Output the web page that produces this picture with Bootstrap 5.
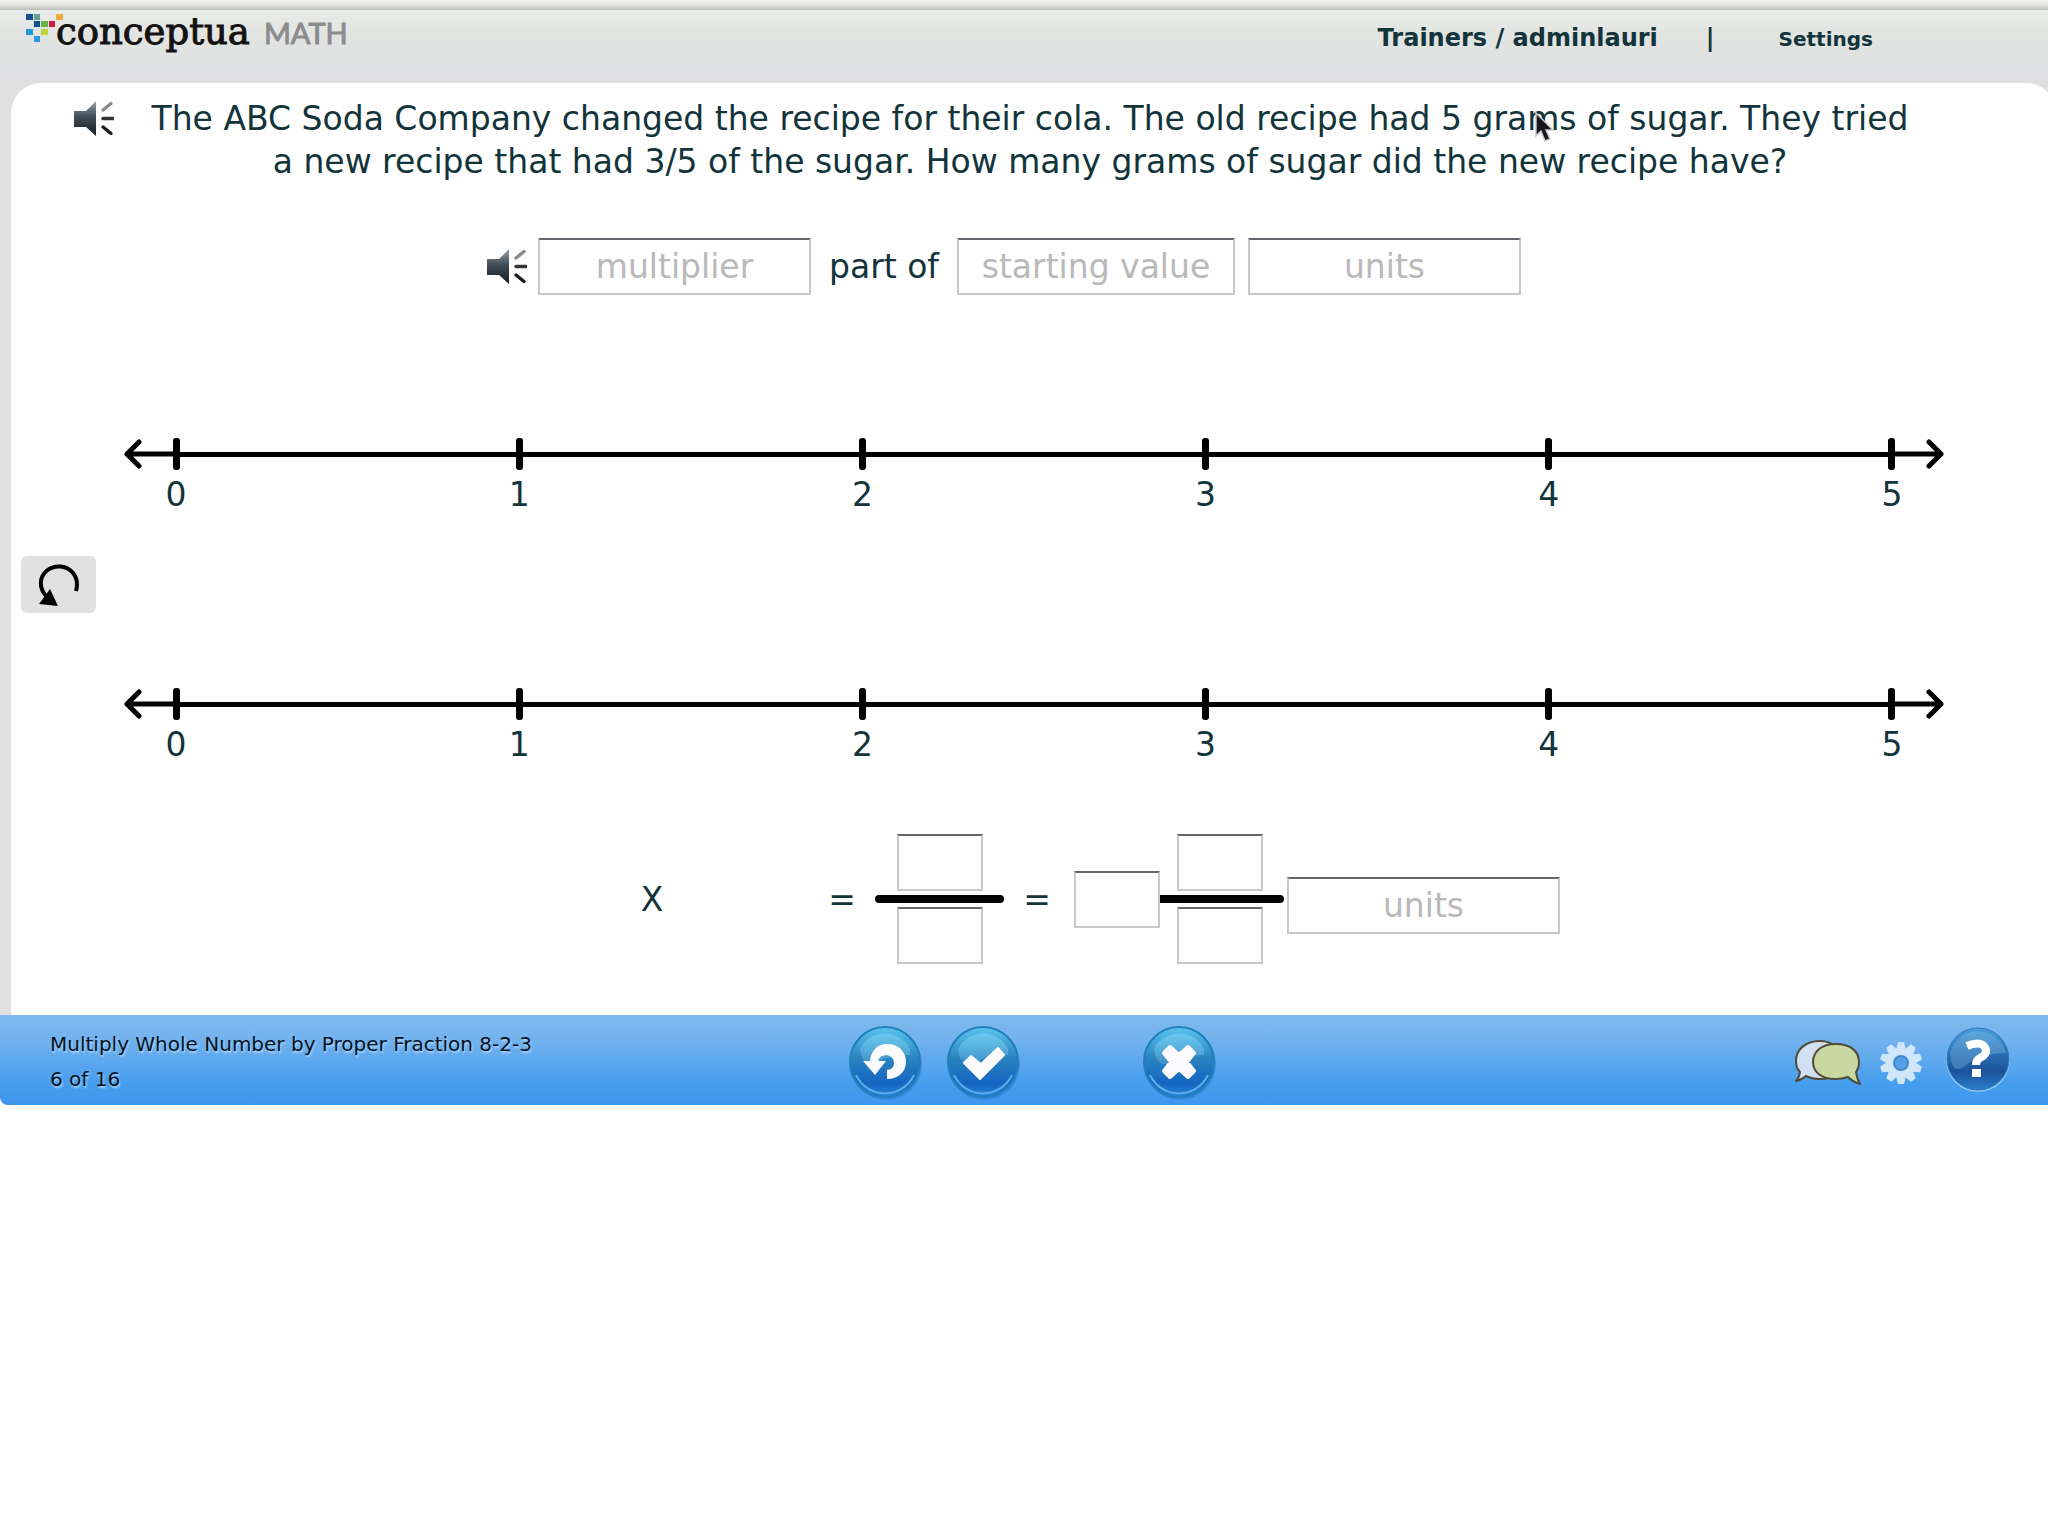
<!DOCTYPE html>
<html lang="en">
<head>
<meta charset="utf-8">
<meta name="viewport" content="width=device-width, initial-scale=1">
<title>Conceptua Math</title>
<link href="https://cdn.jsdelivr.net/npm/bootstrap@5.3.0/dist/css/bootstrap.min.css" rel="stylesheet">
<style>
body{background:#fefefe;color:#12343a;font-family:"DejaVu Sans",sans-serif;font-size:33px;line-height:43px;overflow-x:hidden}
.player{background:#e0e0e1;border-bottom-left-radius:8px;overflow:hidden}
.window-edge{height:10px;background:linear-gradient(#f0f1ef,#e6e8e5 45%,#b9bcb7)}
.topbar{height:73px;padding:0 175px 0 26px;background:linear-gradient(#e8ebe7,#e1e4e1 35%,#dfdfe2)}
.topbar a{color:inherit;text-decoration:none}
.logo{gap:14px}
.logo-squares{margin-right:-8px}
.logo-word{font-family:"DejaVu Serif",serif;font-size:37px;color:#131313;-webkit-text-stroke:1px #131313}
.logo-math{font-family:Lato,sans-serif;font-size:29px;color:#8c8c8e;-webkit-text-stroke:1px #8c8c8e}
.topnav{padding-top:7px}
.account{font-size:24px}
.settings{font-size:20px}
.sheet{background:#fefefe;margin:0 -8px 0 11px;border-radius:30px 30px 0 0;padding:14px 0 51px}
.question{gap:26px;padding:0 136px 0 62px}
.answer-row{margin-top:55px;padding-right:60px}
.speak{margin-right:11px}
.entry{height:57px;border:2px solid #c9c7cb;border-top-color:#66646a;border-radius:0;background:#fefefe;padding:0;text-align:center;font-size:33px;color:#12343a}
.entry::placeholder{color:#b9b9ba;opacity:1}
.entry:focus{outline:2px solid #4a9fee}
.w-unit{width:273px}.w-start{width:278px}.w-digit{width:86px}
.word-slot{width:146px}
.noun{margin-left:13px}
.lines{margin-top:143px}
.reset{width:75px;height:57px;margin:118px 0 0 10px;border:0;border-radius:6px;background:#e1e1e2;padding:0}
.axes{margin-left:28px;margin-right:112px}
.axis+.axis{margin-top:172px}
.shaft{height:32px}
.ticks{background:linear-gradient(#000,#000) center/100% 5px no-repeat}
.tick{width:7px;height:32px;border-radius:3px;background:#000}
.numerals{margin-top:3px;padding:0 30px}
.numerals span{width:44px;text-align:center}
.equation{margin-top:68px}
.blank-a{width:115px}.blank-b{width:127px}.sym-x{width:60px}.sym-eq{width:66px}
.bar{height:8px;margin:4px 0;background:#000;border-radius:4px;align-self:stretch}
.fraction{width:129px}.fraction-mixed{width:124px}
.fraction-mixed .bar{border-radius:0 4px 4px 0}
.fraction-mixed .entry{margin-right:4px}
.result{margin:12px 0 0 3px}
.toolbar{height:90px;background:linear-gradient(#7db9ee,#75b3ee 25%,#479eee 75%,#3e97ee);padding:4px 36px 0 50px}
.lesson{font-size:20px;line-height:35px;color:#06131f;text-shadow:1px 2px 2px #a9d4fa}
.side{flex:1 1 0}
.icon-btn{border:0;background:none;padding:0;line-height:0}
.gap-a{margin-left:18px}.gap-b{margin-left:116px}
.pointer{position:absolute;left:1534px;top:112px;pointer-events:none}
</style>
</head>
<body>
<div class="player">
  <div class="window-edge"></div>
  <header class="topbar d-flex align-items-start">
    <a href="#" class="logo d-flex align-items-baseline">
      <span class="d-flex align-items-start">
        <svg class="logo-squares flex-shrink-0 mt-1" width="38" height="30" viewBox="0 0 38 30" aria-hidden="true">
          <path fill="#11508f" d="M0 0h7v6H0zM8 7h6v6H8z"/><path fill="#5fa58a" d="M8 0h6v6H8z"/><path fill="#61b34a" d="M15 7h7v6h-7z"/>
          <path fill="#c9203c" d="M23 7h6v6h-6z"/><path fill="#efad36" d="M30 0h7v6h-7z"/><path fill="#2699dc" d="M0 15h7v6H0zM8 22h6v6H8z"/><path fill="#bed33c" d="M15 15h7v6h-7z"/>
        </svg>
        <span class="logo-word">conceptua</span>
      </span>
      <span class="logo-math">MATH</span>
    </a>
    <nav class="topnav ms-auto d-flex align-items-baseline fw-bold">
      <a href="#" class="account">Trainers / adminlauri</a>
      <span class="account mx-5">|</span>
      <a href="#" class="settings ms-3">Settings</a>
    </nav>
  </header>

  <main class="sheet">
    <div class="question d-flex align-items-start">
      <button class="icon-btn mt-1 flex-shrink-0" aria-label="Read the question aloud">
        <svg width="41" height="36" viewBox="0 0 41 36"><defs><linearGradient id="spk" x1="0" y1="0" x2="0" y2="1"><stop offset="0" stop-color="#9aa2a8"/><stop offset=".45" stop-color="#414d57"/><stop offset="1" stop-color="#111b22"/></linearGradient></defs>
        <path fill="url(#spk)" d="M1 10h12L23 0v35L13 26H1z"/><g stroke-width="3.4" stroke-linecap="round"><path stroke="#8b8b8f" d="M30 9l8-6.500"/><path stroke="#353238" d="M30 17.500h10"/><path stroke="#1e1a20" d="M30 26l8 6.500"/></g></svg>
      </button>
      <p class="mb-0 flex-grow-1 text-center">The ABC Soda Company changed the recipe for their cola. The old recipe had 5 grams of sugar. They tried<br class="d-none d-xl-inline"> a new recipe that had 3/5 of the sugar. How many grams of sugar did the new recipe have?</p>
    </div>

    <div class="answer-row d-flex justify-content-center align-items-center">
      <button class="icon-btn speak" aria-label="Read the sentence aloud">
        <svg width="41" height="36" viewBox="0 0 41 36"><path fill="url(#spk)" d="M1 10h12L23 0v35L13 26H1z"/><g stroke-width="3.4" stroke-linecap="round"><path stroke="#8b8b8f" d="M30 9l8-6.500"/><path stroke="#353238" d="M30 17.500h10"/><path stroke="#1e1a20" d="M30 26l8 6.500"/></g></svg>
      </button>
      <input class="entry w-unit" type="text" placeholder="multiplier" aria-label="multiplier">
      <span class="word-slot text-center">part of</span>
      <input class="entry w-start" type="text" placeholder="starting value" aria-label="starting value">
      <input class="entry w-unit noun" type="text" placeholder="units" aria-label="units">
    </div>

    <div class="lines d-flex align-items-start">
      <button class="reset flex-shrink-0" aria-label="Start over">
        <svg class="d-block mx-auto" width="42" height="44" viewBox="0 0 42 44"><path d="M8 33C1 25 1 14 9 7.500 17 1 29 2.500 35 10c4 5 5 11 3 18" fill="none" stroke="#000" stroke-width="4"/><path d="M12 26l8 17-19-2z"/></svg>
      </button>
      <div class="axes flex-grow-1">
        <div class="axis">
          <div class="shaft d-flex">
            <svg width="49" height="32" viewBox="0 0 49 32"><path d="M49 16H3M15 4L3 16l12 12" fill="none" stroke="#000" stroke-width="5" stroke-linecap="round" stroke-linejoin="round"/></svg>
            <div class="ticks d-flex justify-content-between flex-grow-1"><i class="tick"></i><i class="tick"></i><i class="tick"></i><i class="tick"></i><i class="tick"></i><i class="tick"></i></div>
            <svg width="49" height="32" viewBox="0 0 49 32"><path d="M0 16h46M34 4l12 12-12 12" fill="none" stroke="#000" stroke-width="5" stroke-linecap="round" stroke-linejoin="round"/></svg>
          </div>
          <div class="numerals d-flex justify-content-between"><span>0</span><span>1</span><span>2</span><span>3</span><span>4</span><span>5</span></div>
        </div>
        <div class="axis">
          <div class="shaft d-flex">
            <svg width="49" height="32" viewBox="0 0 49 32"><path d="M49 16H3M15 4L3 16l12 12" fill="none" stroke="#000" stroke-width="5" stroke-linecap="round" stroke-linejoin="round"/></svg>
            <div class="ticks d-flex justify-content-between flex-grow-1"><i class="tick"></i><i class="tick"></i><i class="tick"></i><i class="tick"></i><i class="tick"></i><i class="tick"></i></div>
            <svg width="49" height="32" viewBox="0 0 49 32"><path d="M0 16h46M34 4l12 12-12 12" fill="none" stroke="#000" stroke-width="5" stroke-linecap="round" stroke-linejoin="round"/></svg>
          </div>
          <div class="numerals d-flex justify-content-between"><span>0</span><span>1</span><span>2</span><span>3</span><span>4</span><span>5</span></div>
        </div>
      </div>
    </div>

    <div class="equation d-flex justify-content-center align-items-center text-center">
      <span class="blank-a"></span><span class="sym-x">X</span><span class="blank-b"></span>
      <span class="sym-eq">=</span>
      <div class="fraction d-flex flex-column align-items-center">
        <input class="entry w-digit" type="text" aria-label="numerator"><div class="bar"></div><input class="entry w-digit" type="text" aria-label="denominator">
      </div>
      <span class="sym-eq me-1">=</span>
      <input class="entry w-digit" type="text" aria-label="whole number">
      <div class="fraction-mixed d-flex flex-column align-items-center">
        <input class="entry w-digit" type="text" aria-label="mixed numerator"><div class="bar"></div><input class="entry w-digit" type="text" aria-label="mixed denominator">
      </div>
      <input class="entry w-unit result" type="text" placeholder="units" aria-label="answer units">
    </div>
  </main>

  <footer class="toolbar d-flex align-items-center">
    <div class="side lesson"><div>Multiply Whole Number by Proper Fraction 8-2-3</div><div>6 of 16</div></div>
    <div class="d-flex">
      <button class="icon-btn" aria-label="Undo">
        <svg width="80" height="80" viewBox="0 0 80 80"><defs><linearGradient id="orb" x1="0" y1="0" x2="0" y2="1"><stop offset="0" stop-color="#5cc3ee"/><stop offset=".45" stop-color="#2a83bf"/><stop offset=".8" stop-color="#1565c0"/><stop offset="1" stop-color="#2585dc"/></linearGradient><linearGradient id="gloss" x1="0" y1="0" x2="0" y2="1"><stop offset="0" stop-color="#7fdcf8" stop-opacity=".5"/><stop offset="1" stop-color="#8fd0f0" stop-opacity=".25"/></linearGradient></defs>
        <circle cx="42" cy="42" r="36" fill="#1c62b4" opacity=".35"/><circle cx="41" cy="40" r="35" fill="url(#orb)" stroke="#1f7fba" stroke-width="2"/><path d="M12 53a32 32 0 0 0 58 0" fill="none" stroke="#5cacec" stroke-width="2"/><path d="M16 27a28 28 0 0 1 50 0v6q-20 0-32 7t-17-7z" fill="url(#gloss)"/>
        <path fill="#fbfbfd" d="M43 57V48q7-1 7-7t-7-8q-7 0-9 6h8L31 53 19 39h7c1-11 8-17 17-17 12 0 19 8 19 18S54 57 43 57z"/></svg>
      </button>
      <button class="icon-btn gap-a" aria-label="Check answer">
        <svg width="80" height="80" viewBox="0 0 80 80"><circle cx="42" cy="42" r="36" fill="#1c62b4" opacity=".35"/><circle cx="41" cy="40" r="35" fill="url(#orb)" stroke="#1f7fba" stroke-width="2"/><path d="M12 53a32 32 0 0 0 58 0" fill="none" stroke="#5cacec" stroke-width="2"/><path d="M16 27a28 28 0 0 1 50 0v6q-20 0-32 7t-17-7z" fill="url(#gloss)"/>
        <path fill="#fbfbfd" stroke="#fbfbfd" stroke-width="2" stroke-linejoin="round" d="M22 41l7-7 10 8 17-16 6 7-24 24z"/></svg>
      </button>
      <button class="icon-btn gap-b" aria-label="Clear answer">
        <svg width="80" height="80" viewBox="0 0 80 80"><circle cx="42" cy="42" r="36" fill="#1c62b4" opacity=".35"/><circle cx="41" cy="40" r="35" fill="url(#orb)" stroke="#1f7fba" stroke-width="2"/><path d="M12 53a32 32 0 0 0 58 0" fill="none" stroke="#5cacec" stroke-width="2"/><path d="M16 27a28 28 0 0 1 50 0v6q-20 0-32 7t-17-7z" fill="url(#gloss)"/>
        <path fill="#fbfbfd" stroke="#fbfbfd" stroke-width="4" stroke-linejoin="round" d="M32 25l9 8 9-8 6 6-7 9 7 9-6 6-9-8-9 8-6-6 7-9-7-9z"/></svg>
      </button>
    </div>
    <div class="side d-flex justify-content-end align-items-center">
      <button class="icon-btn" aria-label="Discussion">
        <svg width="68" height="46" viewBox="0 0 68 46"><g stroke="#514b38" stroke-width="2" stroke-linejoin="round"><path fill="#d3e0f2" d="M26 2C11 2 2 11 2 22q0 7 4 11-1 6-4 9 7-2 10-5 6 3 14 3c15 0 22-8 22-18S40 2 26 2z"/><path fill="#c9d7a1" d="M42 5C27 5 19 13 19 23s8 17 23 17q6 0 12-2 5 5 12 7-3-5-4-12 3-4 3-10C65 12 56 5 42 5z"/></g></svg>
      </button>
      <button class="icon-btn ms-3" aria-label="Options">
        <svg width="50" height="46" viewBox="-23 -24 50 46"><g fill="#cfe6fb"><path d="M-3-21h6l2 8h-10z"/><path d="M-3-21h6l2 8h-10z" transform="rotate(36)"/><path d="M-3-21h6l2 8h-10z" transform="rotate(72)"/><path d="M-3-21h6l2 8h-10z" transform="rotate(108)"/><path d="M-3-21h6l2 8h-10z" transform="rotate(144)"/><path d="M-3-21h6l2 8h-10z" transform="rotate(180)"/><path d="M-3-21h6l2 8h-10z" transform="rotate(216)"/><path d="M-3-21h6l2 8h-10z" transform="rotate(252)"/><path d="M-3-21h6l2 8h-10z" transform="rotate(288)"/><path d="M-3-21h6l2 8h-10z" transform="rotate(324)"/><circle r="15"/></g><circle r="7" fill="#559fe4" stroke="#4388cc" stroke-width="2"/></svg>
      </button>
      <button class="icon-btn ms-3" aria-label="Help">
        <svg width="68" height="70" viewBox="0 1 68 70"><defs><linearGradient id="hlp" x1="0" y1="0" x2="0" y2="1"><stop offset="0" stop-color="#4aa0dc"/><stop offset=".45" stop-color="#286cb0"/><stop offset=".7" stop-color="#1c539b"/><stop offset="1" stop-color="#2d7cc9"/></linearGradient></defs><circle cx="34" cy="34" r="32" fill="#8cc9f5"/><circle cx="34" cy="33" r="31" fill="url(#hlp)" stroke="#2e75b8"/><path d="M6 27a29 29 0 0 1 56 0q-26 0-40 12T6 27z" fill="#8fc8ea" opacity=".3"/><path fill="none" stroke="#fff" stroke-width="8" d="M23 20q12-5 17 0c5 6 0 10-4 12q-4 2-4 7"/><path fill="#fff" d="M28 43h9v8h-9z"/></svg>
      </button>
    </div>
  </footer>
</div>
<svg class="pointer" width="20" height="32" viewBox="0 0 20 32" aria-hidden="true"><path d="M2 1v23l5-5 4 10 5-2-4-9h7z" fill="#17171b" stroke="#c9c9cc" stroke-width="1.500"/></svg>
<script src="https://cdn.jsdelivr.net/npm/bootstrap@5.3.0/dist/js/bootstrap.bundle.min.js"></script>
</body>
</html>
